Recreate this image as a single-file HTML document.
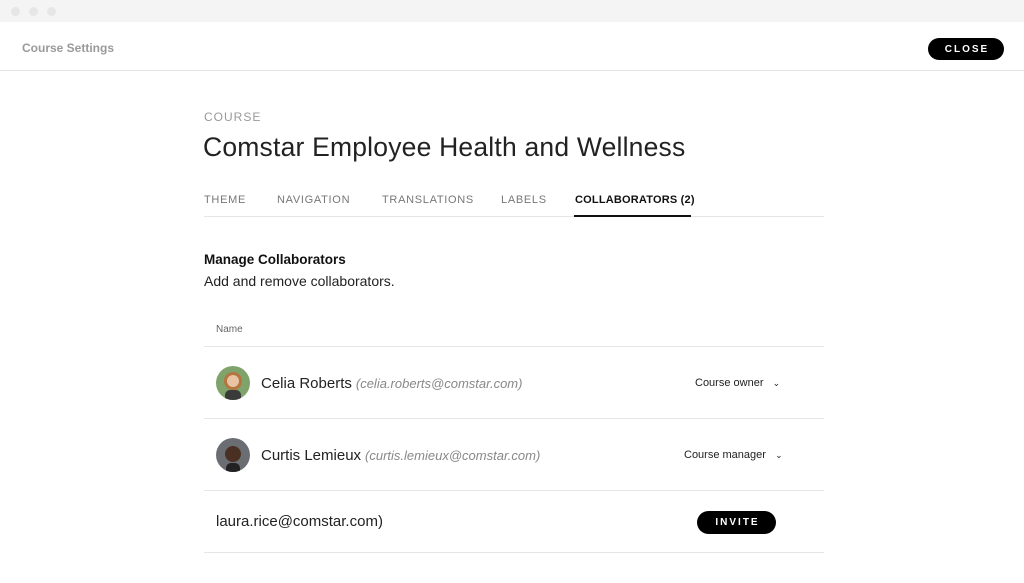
<!DOCTYPE html>
<html><head><meta charset="utf-8"><style>
*{margin:0;padding:0;box-sizing:border-box}
body{width:1024px;height:583px;overflow:hidden;background:#fff;font-family:"Liberation Sans",sans-serif;position:relative;color:#222}
.a{position:absolute;white-space:nowrap}
.top{left:0;top:0;width:1024px;height:22px;background:#f4f4f4}
.dot{width:9px;height:9px;border-radius:50%;background:#e6e6e6;top:7px}
.hdr{left:0;top:70px;width:1024px;height:1px;background:#e2e2e2}
.pill{background:#000;color:#fff;border-radius:12px;font-size:10px;font-weight:bold;letter-spacing:2px;display:flex;align-items:center;justify-content:center;padding-left:2px}
.tab{top:194px;font-size:11px;letter-spacing:0.7px;color:#777}
.line{left:204px;width:620px;height:1px;background:#e6e6e6}
.av{width:34px;height:34px;border-radius:50%;left:216px;overflow:hidden}
.nm{font-size:15px;color:#222}
.em{font-style:italic;color:#888;font-size:13px;margin-left:4px}
.role{font-size:11px;color:#222}
</style></head><body>
<div class="a top"></div>
<div class="a dot" style="left:11px"></div><div class="a dot" style="left:29px"></div><div class="a dot" style="left:47px"></div>
<div class="a" style="left:22px;top:41px;font-size:12px;font-weight:bold;color:#9a9a9a">Course Settings</div>
<div class="a pill" style="left:928px;top:38px;width:76px;height:22px">CLOSE</div>
<div class="a hdr"></div>

<div class="a" style="left:204px;top:110px;font-size:12px;letter-spacing:1px;color:#999">COURSE</div>
<div class="a" style="left:203px;top:132px;font-size:26.5px;color:#222;font-weight:300;letter-spacing:0.2px">Comstar Employee Health and Wellness</div>

<div class="a tab" style="left:204px">THEME</div>
<div class="a tab" style="left:277px">NAVIGATION</div>
<div class="a tab" style="left:382px">TRANSLATIONS</div>
<div class="a tab" style="left:501px">LABELS</div>
<div class="a tab" style="left:575px;color:#111;font-weight:bold;letter-spacing:0.2px">COLLABORATORS (2)</div>
<div class="a line" style="top:216px"></div>
<div class="a" style="left:574px;top:215px;width:117px;height:2px;background:#111"></div>

<div class="a" style="left:204px;top:252px;font-size:13.5px;font-weight:bold;color:#111">Manage Collaborators</div>
<div class="a" style="left:204px;top:273px;font-size:14px;color:#222">Add and remove collaborators.</div>

<div class="a" style="left:216px;top:324px;font-size:10px;color:#666">Name</div>
<div class="a line" style="top:346px"></div>

<div class="a av" style="top:366px;background:#7fa36a">
<svg width="34" height="34"><circle cx="17" cy="15" r="9" fill="#b5753f"/><circle cx="17" cy="15" r="6" fill="#e8c3a4"/><rect x="9" y="24" width="16" height="12" rx="5" fill="#3a3a3a"/></svg></div>
<div class="a" style="left:261px;top:375px"><span class="nm">Celia Roberts</span><span class="em">(celia.roberts@comstar.com)</span></div>
<div class="a role" style="left:695px;top:377px">Course owner&nbsp;&nbsp;&nbsp;<span style="font-size:9px">&#8964;</span></div>
<div class="a line" style="top:418px"></div>

<div class="a av" style="top:438px;background:#6a6e72">
<svg width="34" height="34"><circle cx="17" cy="16" r="8" fill="#4a3022"/><rect x="10" y="25" width="14" height="12" rx="5" fill="#222"/></svg></div>
<div class="a" style="left:261px;top:447px"><span class="nm">Curtis Lemieux</span><span class="em">(curtis.lemieux@comstar.com)</span></div>
<div class="a role" style="left:684px;top:449px">Course manager&nbsp;&nbsp;&nbsp;<span style="font-size:9px">&#8964;</span></div>
<div class="a line" style="top:490px"></div>

<div class="a nm" style="left:216px;top:513px">laura.rice@comstar.com)</div>
<div class="a pill" style="left:697px;top:511px;width:79px;height:23px">INVITE</div>
<div class="a line" style="top:552px"></div>
</body></html>
